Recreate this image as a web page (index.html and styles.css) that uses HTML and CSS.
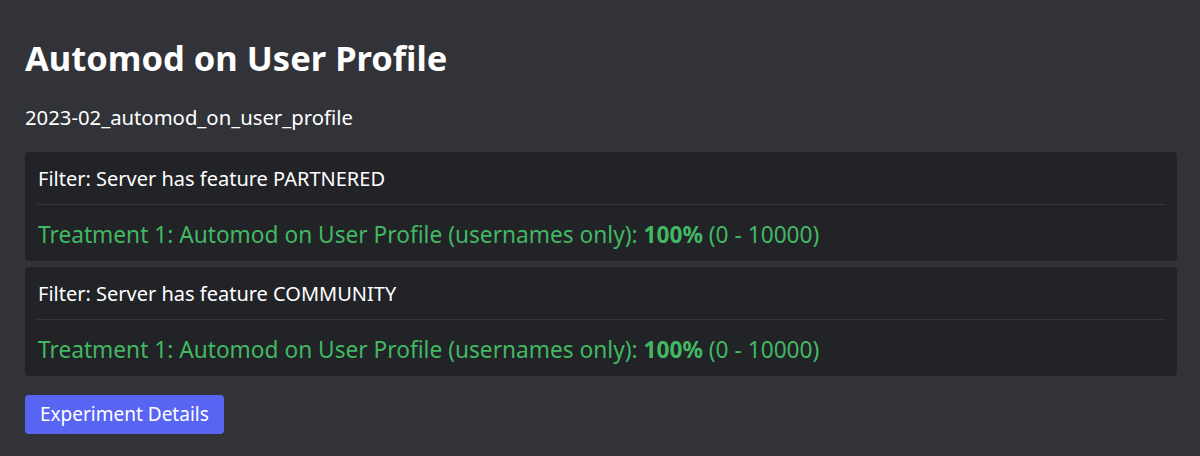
FILE: index.html
```html
<!DOCTYPE html>
<html lang="en">
<head>
<meta charset="utf-8">
<title>Automod on User Profile</title>
<link rel="stylesheet" href="styles.css">
</head>
<body>
<main class="page">
  <h1 class="title">Automod on User Profile</h1>
  <p class="id">2023-02_automod_on_user_profile</p>
  <section class="card">
    <div class="filter">Filter: Server has feature PARTNERED</div>
    <div class="treatment">Treatment 1: Automod on User Profile (usernames only): <b>100%</b> (0 - 10000)</div>
  </section>
  <section class="card">
    <div class="filter">Filter: Server has feature COMMUNITY</div>
    <div class="treatment">Treatment 1: Automod on User Profile (usernames only): <b>100%</b> (0 - 10000)</div>
  </section>
  <button class="btn" type="button">Experiment Details</button>
</main>
</body>
</html>
```

FILE: styles.css
```css
html, body {
  margin: 0;
  padding: 0;
  background: #313338;
  height: 100%;
}
body {
  font-family: "Noto Sans", "Open Sans", sans-serif;
  color: #ffffff;
}
.page {
  padding: 30px 23px 20px 25px;
  display: flex;
  flex-direction: column;
  align-items: flex-start;
}
.title {
  margin: 0;
  font-size: 34.5px;
  line-height: 56px;
  font-weight: 700;
}
.id {
  margin: 17px 0 21px;
  font-size: 20.3px;
  line-height: 28px;
}
.card {
  align-self: stretch;
  background: #222327;
  border-radius: 4px;
  padding: 0 12px;
  margin-bottom: 6px;
}
.filter {
  padding: 13px 1px 11px;
  font-size: 20px;
  line-height: 28px;
  border-bottom: 1px solid #34353a;
}
.treatment {
  padding: 14px 1px 10px;
  font-size: 22.7px;
  line-height: 32px;
  color: #41b862;
}
.treatment b {
  font-weight: 700;
}
.btn {
  margin-top: 13px;
  background: #5865f2;
  color: #ffffff;
  border: 0;
  border-radius: 4px;
  font-family: inherit;
  font-size: 19px;
  line-height: 39px;
  padding: 0 15px;
  cursor: pointer;
}
```
